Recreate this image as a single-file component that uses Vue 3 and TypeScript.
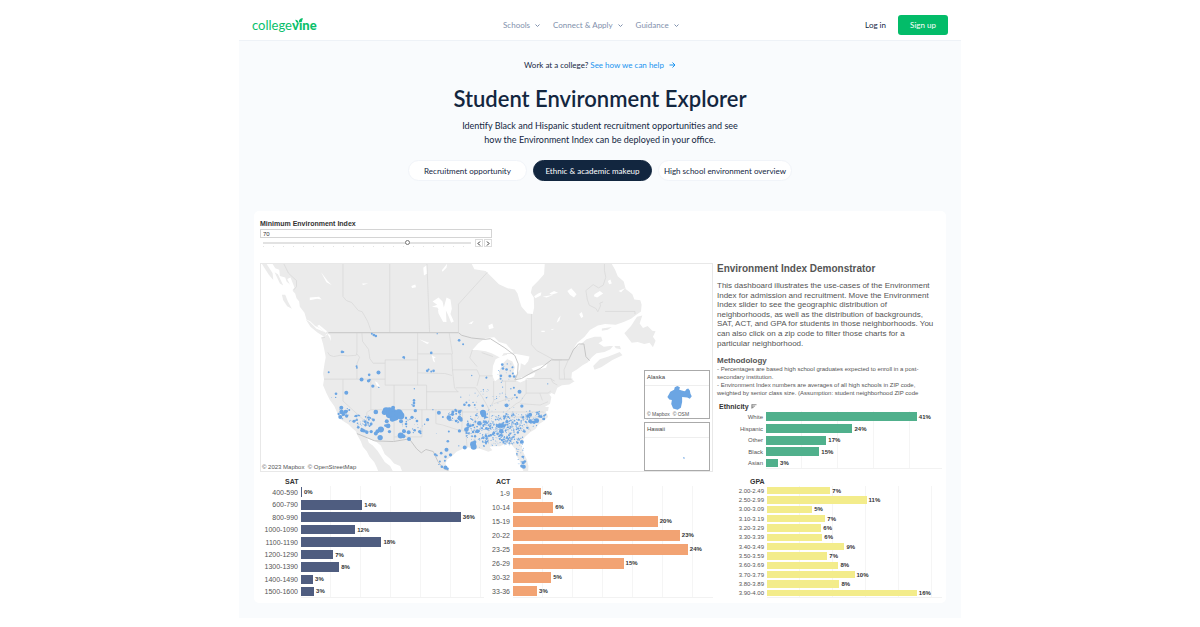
<script setup lang="ts">
import { ref } from 'vue'

interface Row {
  label: string
  share: string
  size: number
}

interface Chart {
  id: string
  title: string
  domain: number
  rows: Row[]
}

type Dot = [number, number, number]

const menus: string[] = ['Schools', 'Connect & Apply', 'Guidance']
const tabs: string[] = ['Recruitment opportunity', 'Ethnic & academic makeup', 'High school environment overview']
const activeTab = ref(1)
const minIndex = ref(70)

function step(delta: number): void {
  minIndex.value = Math.min(100, Math.max(0, Number(minIndex.value) + delta))
}

function rows(data: [string, string, number][]): Row[] {
  return data.map(([label, share, size]) => ({ label, share, size }))
}

const ethnicity: Chart = {
  id: 'ethnicity',
  title: 'Ethnicity',
  domain: 175,
  rows: rows([
    ['White', '41%', 150],
    ['Hispanic', '24%', 86],
    ['Other', '17%', 60],
    ['Black', '15%', 53],
    ['Asian', '3%', 12],
  ]),
}

const scores: Chart[] = [
  {
    id: 'sat',
    title: 'SAT',
    domain: 182,
    rows: rows([
      ['400-590', '0%', 1],
      ['600-790', '14%', 61],
      ['800-990', '36%', 159],
      ['1000-1090', '12%', 54],
      ['1100-1190', '18%', 80],
      ['1200-1290', '7%', 32],
      ['1300-1390', '8%', 38],
      ['1400-1490', '3%', 12],
      ['1500-1600', '3%', 13],
    ]),
  },
  {
    id: 'act',
    title: 'ACT',
    domain: 199,
    rows: rows([
      ['1-9', '4%', 28],
      ['10-14', '6%', 40],
      ['15-19', '20%', 144],
      ['20-22', '23%', 166],
      ['23-25', '24%', 174],
      ['26-29', '15%', 110],
      ['30-32', '5%', 38],
      ['33-36', '3%', 24],
    ]),
  },
  {
    id: 'gpa',
    title: 'GPA',
    domain: 174,
    rows: rows([
      ['2.00-2.49', '7%', 63],
      ['2.50-2.99', '11%', 99],
      ['3.00-3.09', '5%', 45],
      ['3.10-3.19', '7%', 58],
      ['3.20-3.29', '6%', 54],
      ['3.30-3.39', '6%', 55],
      ['3.40-3.49', '9%', 77],
      ['3.50-3.59', '7%', 60],
      ['3.60-3.69', '8%', 71],
      ['3.70-3.79', '10%', 87],
      ['3.80-3.89', '8%', 72],
      ['3.90-4.00', '16%', 149],
    ]),
  },
]

function barWidth(size: number, domain: number): string {
  return `${(size / domain) * 100}%`
}

const placed: Dot[] = [
  [349, 219, 3], [355, 223, 4], [361, 226, 4], [259, 274, 4], [263, 274, 3], [219, 335, 3],
  [303, 317, 3], [304, 322, 3], [445, 290, 4], [447, 294, 2], [528, 277, 4], [546, 219, 2],
  [612, 239, 4], [624, 251, 3], [516, 331, 4], [520, 327, 3], [528, 333, 3], [535, 331, 4],
  [369, 336, 6], [318, 357, 6], [341, 343, 4], [339, 361, 5], [343, 358, 3], [352, 377, 5],
  [370, 381, 2], [272, 397, 6], [241, 400, 4], [240, 411, 2], [228, 411, 1], [257, 442, 6],
  [258, 455, 7], [270, 454, 6], [254, 470, 6], [264, 462, 5], [273, 467, 5], [281, 449, 3],
  [477, 385, 2], [476, 420, 4], [476, 428, 4], [475, 436, 4], [470, 433, 2], [480, 451, 5],
  [361, 455, 7], [413, 442, 6], [392, 451, 10], [387, 456, 8], [402, 450, 9], [403, 462, 12],
  [412, 458, 13], [417, 467, 15], [430, 460, 13], [436, 466, 11], [411, 476, 8], [437, 483, 6],
  [394, 483, 6], [398, 497, 7], [390, 496, 4], [402, 514, 5], [376, 508, 9], [366, 513, 6],
  [361, 520, 6], [374, 532, 8], [380, 507, 5], [320, 510, 6], [326, 512, 5], [333, 514, 4],
  [347, 514, 5], [436, 526, 9], [444, 528, 6], [446, 513, 6], [460, 516, 6], [461, 536, 6],
  [470, 471, 5], [485, 482, 4], [452, 491, 4], [478, 510, 4], [493, 514, 5], [496, 519, 3],
  [517, 478, 5], [508, 492, 2], [551, 457, 6], [563, 470, 3], [581, 472, 7], [592, 462, 5],
  [603, 482, 4], [615, 477, 4], [618, 479, 5], [613, 455, 5], [617, 451, 3], [629, 562, 6],
  [574, 569, 6], [586, 584, 5], [558, 579, 4], [540, 583, 4], [545, 586, 3], [571, 590, 4],
  [569, 602, 3], [554, 604, 3], [551, 613, 2], [560, 620, 4], [571, 622, 6], [577, 626, 4],
  [578, 543, 4], [581, 514, 3], [611, 557, 2], [613, 512, 5], [543, 520, 1], [533, 448, 2],
  [617, 410, 2], [628, 433, 4], [634, 426, 3], [642, 435, 4], [659, 434, 3], [683, 436, 4],
  [650, 345, 2], [695, 350, 2], [685, 388, 2], [694, 412, 2], [684, 457, 9], [686, 463, 8],
  [654, 552, 9], [656, 560, 9], [659, 545, 5], [673, 489, 7], [634, 508, 7], [667, 513, 6],
  [794, 394, 6], [755, 435, 6], [801, 437, 5], [826, 463, 6], [819, 467, 5], [826, 483, 6],
  [838, 486, 5], [846, 481, 7], [854, 468, 4], [859, 469, 4], [868, 466, 3], [872, 463, 3],
  [801, 545, 6], [732, 497, 6], [739, 496, 7], [747, 497, 5], [739, 513, 7], [756, 484, 5],
  [752, 468, 3], [805, 608, 5], [801, 618, 5], [807, 620, 6], [810, 604, 4], [803, 590, 3],
  [742, 312, 4], [757, 310, 2], [744, 324, 4], [755, 327, 4], [773, 320, 3], [738, 346, 4],
  [765, 347, 4], [774, 339, 3], [778, 348, 4], [737, 355, 3], [777, 382, 3], [768, 385, 2],
  [694, 352, 3], [879, 370, 2], [780, 404, 3], [786, 411, 3], [753, 409, 2], [743, 380, 2],
]

/* Each area: centre x, centre y, half width, half height, number of dots, largest radius. */
const areas: number[][] = [
  [675, 508, 45, 54, 115, 4],
  [716, 510, 46, 48, 145, 3],
  [765, 505, 46, 48, 165, 3],
  [802, 490, 45, 30, 60, 3],
  [835, 470, 40, 20, 38, 3],
  [755, 545, 36, 10, 24, 3],
  [796, 575, 13, 42, 26, 3],
  [598, 468, 26, 22, 34, 4],
  [320, 482, 38, 20, 50, 4],
  [265, 458, 18, 20, 14, 3],
  [335, 504, 20, 14, 14, 4],
  [470, 500, 34, 34, 20, 3],
  [755, 435, 60, 40, 28, 1],
  [690, 415, 50, 42, 24, 1],
  [755, 340, 28, 36, 14, 1],
]

function scatter(): Dot[] {
  let seed = 1987
  const next = (): number => {
    seed = (seed * 16807) % 2147483647
    return seed / 2147483647
  }
  const dots: Dot[] = []
  for (const [cx, cy, rx, ry, count, largest] of areas) {
    for (let i = 0; i < count; i++) {
      const angle = next() * Math.PI * 2
      const reach = Math.sqrt(next())
      dots.push([
        Math.round(cx + Math.cos(angle) * rx * reach),
        Math.round(cy + Math.sin(angle) * ry * reach),
        1 + Math.round(next() * next() * largest * 10) / 10,
      ])
    }
  }
  return dots
}

const dots: Dot[] = [...placed, ...scatter()]
</script>

<template>
  <div class="page">
    <header class="top">
      <a class="logo" href="#" aria-label="collegevine">
        <span class="logo-light">college</span><span class="logo-bold">vine</span>
        <svg class="leaf" viewBox="0 0 18 12" aria-hidden="true">
          <path d="M8 12C8 7 5 4 0 4c1 5 3 7 7 8zM9 11C8 5 11 1 18 0c0 6-3 10-9 11z" />
        </svg>
      </a>
      <nav class="menus">
        <button v-for="menu in menus" :key="menu" type="button" class="menu">
          {{ menu }}
          <svg class="chevron" viewBox="0 0 10 6" aria-hidden="true"><path d="M1 1l4 4 4-4" /></svg>
        </button>
      </nav>
      <div class="account">
        <a class="login" href="#">Log in</a>
        <button type="button" class="signup">Sign up</button>
      </div>
    </header>

    <main class="body">
      <p class="promo">
        Work at a college?
        <a href="#">See how we can help
          <svg class="arrow" viewBox="0 0 14 12" aria-hidden="true"><path d="M1 6h11M7 1l5 5-5 5" /></svg>
        </a>
      </p>
      <h1>Student Environment Explorer</h1>
      <p class="intro">Identify Black and Hispanic student recruitment opportunities and see<br>how the Environment Index can be deployed in your office.</p>

      <div class="tabs" role="tablist">
        <button
          v-for="(tab, i) in tabs"
          :key="tab"
          type="button"
          role="tab"
          class="tab"
          :class="{ active: i === activeTab }"
          :aria-selected="i === activeTab"
          @click="activeTab = i"
        >{{ tab }}</button>
      </div>

      <section class="card">
        <div class="parameter">
          <label for="min-index">Minimum Environment Index</label>
          <input id="min-index" v-model="minIndex" class="value" type="text">
          <div class="slider-row">
            <input v-model="minIndex" class="slider" type="range" min="0" max="100" aria-label="Minimum Environment Index slider">
            <button type="button" class="step" aria-label="Decrease" @click="step(-1)">
              <svg viewBox="0 0 8 10" aria-hidden="true"><path d="M6 1L2 5l4 4" /></svg>
            </button>
            <button type="button" class="step" aria-label="Increase" @click="step(1)">
              <svg viewBox="0 0 8 10" aria-hidden="true"><path d="M2 1l4 4-4 4" /></svg>
            </button>
          </div>
        </div>

        <div class="upper">
          <div class="map">
            <svg class="map-art" viewBox="15 9 1359 624" preserveAspectRatio="xMidYMid slice" aria-hidden="true">
              <g class="land">
                <path d="M50 9L58 22 70 26 72 45 88 50 92 62 104 72 112 92 118 98 122 112 130 122 132 138 146 156 152 176 164 182 178 196 192 202 206 214 214 222 202 228 196 230 202 250 206 268 210 290 206 312 202 340 205 356 202 374 212 398 222 418 236 438 244 456 250 474 268 486 278 492 290 504 300 512 306 526 316 544 322 560 334 574 342 590 356 606 364 622 368 633H412L404 618 388 606 378 590 366 572 352 556 340 548 334 530 344 538 360 543 376 556 388 582 404 596 416 610 434 618 440 633H584L575 626 571 610 576 598 590 588 604 575 625 565 640 561 656 567 672 565 688 570 700 575 712 570 704 560 718 558 736 558 752 550 770 554 782 568 784 586 794 600 798 618 806 633H820L821 618 816 598 806 578 801 560 800 545 810 530 826 516 842 506 852 492 864 484 880 470 876 458 864 454 880 452 882 440 870 440 886 430 890 410 884 402 890 398 900 402 908 382 922 374 944 372 960 362 950 356 952 336 968 326 984 314 1000 305 1012 290 1026 278 1050 274 1068 266 1076 256 1066 256 1048 258 1032 248 1044 240 1040 228 1020 228 996 236 976 252 958 262 968 246 990 228 1006 208 1030 194 1052 190 1084 192 1108 184 1130 174 1146 162 1160 152 1162 132 1158 118 1140 116 1134 100 1114 84 1108 62 1090 46 1082 26 1072 9H870L868 40 850 60 832 78 828 96 837 110 838 140 834 160 818 158 800 138 794 120 788 98 780 86 758 82 732 70 704 42 692 30 658 25 650 9z" />
                <path d="M78 102l10 0 8 20 12 22-14-8-12-18zM18 9l14 0 18 28 2 20-14-16zM56 34l10 6 16 34-10-6z" />
                <path d="M150 176l12 8 20 20 30 12-4 14-22-14-22-18zM218 232l8 2 2 10-6-4z" />
                <path d="M1110 218l20-22 18-28 16-4-8 24 10 14 14-6 14 14 10 2-8 16 8 12-8 20-10-14-16 4-20-6-18 2z" />
                <path d="M1016 316l20-20 26-8 34-14 8 10-30 14-34 22-20 8zM1042 203l30-4-12 8-18 3zM1080 256l16 0 4 10-16-3z" />
              </g>
              <g class="water">
                <path d="M652 268l18-20 22-16 26-2 14 14 22 6 22 26-30 2-8 14-28-14-18-6-26-4z" />
                <path d="M714 316l8-20 20-10 18-4 0 10-18 18-10 24 0 20-12 8-8-16z" />
                <path d="M756 280l28 0 40 8-4 14-10 12-12-6-2 18-12 18-10-4 6-20-8-18-14-6zM780 358l28-10 34-12-4 12-42 18zM830 324l20-8 28-6-4 12-38 8z" />
                <path d="M532 122l18-12 12 12 4 18 8-30 12 6 4 28-4 16 10 22-8 4-8-20-8-18 2 36-6 0-12-30-10-14-16-2 16-6zM548 146l10 2 12 34-6 2-14-26z" />
                <path d="M468 75l12-4 2 8-12 2zM504 20l10-8 2 26-10 6zM560 28l16-20-2 12-12 12zM320 68l18 0-16 4zM196 34l20 26 12 12-16-8zM162 110l28-2 8 8-14-2-22 4zM358 362l8 4 8 14-10-4zM528 276l4 10 10 4-6 4 4 12-6-4-4-16zM492 236l16 6 14 4-6 4-14-8z" />
                <path d="M700 194l12-6 4 14-14 4zM640 188l16-8-6 10zM838 106l12-8 10-4-2 10-16 8zM864 108l32-6-20 8zM884 98l14-8 12 6-20 6zM938 90l12-8 16 18-8 10-12-8zM910 174l8-10-4 16-8 6zM974 160l8-6 4 14-6 4zM1020 100l16-10 10 8-18 12-10-4zM1092 90l20-8-12 12zM1060 60l8-4 4 12-8 2zM860 210l10 0 0 4-10 0zM888 206l12-2-8 4z" />
                <path d="M104 50l12 30-6 8-16-34zM190 192l24 20-4 4-26-20zM214 218l10 6 2 18-4-10z" />
              </g>
              <g class="border">
                <path d="M84 9l14 28 24 22 0 18-8 10M262 9v98l10 12 16 6 20 24 12 4 16 28 10 28M403 9v205M515 9l8 205M610 214v-84L697 34M830 160v92l16 18 52 28h24M1050 9v20l4 20-8 24-14 8-16-10-22 18 4 26 6 18 20 10 6 10 8-18-2-8 10-4M1052 152h90v8" />
                <path d="M208 230l-10 2M304 216v58l-2 10-26 2-22-2-20 4-12-4-6-9M304 280l8 10-8 20v46M205 356h184M319 216l2 26 18 24 4 28 10 14 36 0M389 298v76h125M389 298h98M487 216v158M487 280h103l2 48 6 54 10 12M487 337l82 2 22 6M582 216l10 64M346 356v92M262 356v66l66 60 12 12M346 448l-12 8-2 36M416 374v168M346 448h200M514 374v74M514 394h96M546 448h76l-2 64M542 448v42l20 4 56 18M416 530h84v-82M592 328h74M602 382h60l20 28 22 40M620 455h160M666 328l8 18-8 30M672 346h42M652 268l-8 24 22 26M680 276l34 12M716 362v60l-10 18M752 362v60M716 430l40-14 30-6M740 362h44M814 354v44h66l8-6M814 398l-18 26-12 6M622 512h10l4 50M660 470v80M704 454l-4 98M756 470l10 82M726 470h130M784 430l-30 24M780 455h94M796 430l60 4 24-10M855 398l8 22M816 354h70l14 8M888 352l6 14 14 8M914 356v-56M930 356l-2-28 12-28M914 356h40M796 470l16 16 16 26" />
              </g>
              <g class="border strong">
                <path d="M218 216H610L620 224 650 232 690 236 706 234 750 262 780 285 790 310 788 340 780 358 800 354 835 334 856 324 890 298 942 298 956 268 972 250 988 250 994 288 1005 300" />
                <path d="M304 520l54 22 56 2 48-8 22 30 14 12 14-10 22 6 14 30 16 20 16 8" />
              </g>
              <g class="dots">
                <circle v-for="(dot, i) in dots" :key="i" :cx="dot[0]" :cy="dot[1]" :r="dot[2]" />
              </g>
            </svg>
            <span class="credit">© 2023 Mapbox &nbsp;© OpenStreetMap</span>
            <div class="insets">
              <div class="inset">
                <b>Alaska</b>
                <svg class="inset-art" viewBox="0 0 190 78" aria-hidden="true">
                  <path class="alaska" d="M74 18l12-6 2-8 8-4 8 4-2 8 16 4 4-2 2-4 6-2 5 6 2 10 4 8-6 8-8-4-16-2 0 16-4 18-10 6-14-4-6-14 2-12-8-2-6-8 5-8z" />
                </svg>
                <span class="inset-credit">© Mapbox &nbsp;© OSM</span>
              </div>
              <div class="inset">
                <b>Hawaii</b>
                <svg class="inset-art" viewBox="0 0 190 78" aria-hidden="true">
                  <path class="alaska" d="M114 60l6 2-2 3-4-2z" />
                </svg>
              </div>
            </div>
          </div>

          <div class="notes">
            <h2>Environment Index Demonstrator</h2>
            <p class="about">This dashboard illustrates the use-cases of the Environment<br>Index for admission and recruitment. Move the Environment<br>Index slider to see the geographic distribution of<br>neighborhoods, as well as the distribution of backgrounds,<br>SAT, ACT, and GPA for students in those neighborhoods. You<br>can also click on a zip code to filter those charts for a<br>particular neighborhood.</p>
            <h3>Methodology</h3>
            <p class="method">- Percentages are based high school graduates expected to enroll in a post-<br>secondary institution.<br>- Environment Index numbers are averages of all high schools in ZIP code,<br>weighted by senior class size. (Assumption: student neighborhood ZIP code</p>
            <div class="chart ethnicity">
              <h4>
                {{ ethnicity.title }}
                <svg class="sort" viewBox="0 0 16 14" aria-hidden="true"><path d="M2 2h13M2 6h9M2 10h5M2 1v12" /></svg>
              </h4>
              <div class="plot">
                <div v-for="row in ethnicity.rows" :key="row.label" class="row">
                  <span class="name">{{ row.label }}</span>
                  <div class="track">
                    <div class="bar" :style="{ width: barWidth(row.size, ethnicity.domain) }"></div>
                    <b>{{ row.share }}</b>
                  </div>
                </div>
              </div>
            </div>
          </div>
        </div>

        <div class="lower">
          <div v-for="chart in scores" :key="chart.id" class="chart" :class="chart.id">
            <h4>{{ chart.title }}</h4>
            <div class="plot">
              <div v-for="row in chart.rows" :key="row.label" class="row">
                <span class="name">{{ row.label }}</span>
                <div class="track">
                  <div class="bar" :style="{ width: barWidth(row.size, chart.domain) }"></div>
                  <b>{{ row.share }}</b>
                </div>
              </div>
            </div>
          </div>
        </div>
      </section>
    </main>
  </div>
</template>

<style>
body {
  margin: 0;
  background: #fff;
}
</style>

<style scoped>
.page {
  max-width: 722px;
  margin: 0 auto;
  padding-bottom: 10px;
  font-family: Lato, "Open Sans", sans-serif;
  color: #13263f;
}

.page *,
.page *::before {
  box-sizing: border-box;
}

h1, h2, h3, h4, p {
  margin: 0;
}

button {
  margin: 0;
  padding: 0;
  border: 0;
  background: none;
  color: inherit;
  font: inherit;
  cursor: pointer;
}

a {
  color: inherit;
  text-decoration: none;
}

.top {
  display: flex;
  align-items: center;
  justify-content: space-between;
  padding: 15px 13px 5px;
  border-bottom: 1px solid #eef2f7;
  font-size: 8px;
}

.logo {
  position: relative;
  display: flex;
  align-items: baseline;
  color: #0abf6b;
  font-size: 13px;
  line-height: 20px;
}

.logo-light {
  font-weight: 400;
}

.logo-bold {
  font-weight: 900;
}

.leaf {
  position: absolute;
  top: 3px;
  right: 14px;
  width: 8px;
  height: 5px;
  fill: #0abf6b;
}

.menus {
  display: flex;
  gap: 13px;
  color: #7f90ac;
}

.menu {
  display: flex;
  align-items: center;
  gap: 5px;
}

.chevron {
  width: 5px;
  height: 3px;
  fill: none;
  stroke: currentColor;
  stroke-width: 2;
}

.account {
  display: flex;
  align-items: center;
  gap: 12px;
}

.signup {
  width: 50px;
  height: 20px;
  border-radius: 3px;
  background: #03bc69;
  color: #fff;
}

.body {
  padding: 17px 15px 15px;
  background: #f9fbfd;
  text-align: center;
}

.promo {
  font-size: 8px;
  line-height: 14px;
}

.promo a {
  color: #1b94f0;
}

.arrow {
  width: 7px;
  height: 6px;
  margin-left: 3px;
  fill: none;
  stroke: currentColor;
  stroke-width: 2;
}

h1 {
  margin-top: 13px;
  font-size: 22px;
  line-height: 28px;
  font-weight: 600;
}

.intro {
  margin-top: 6px;
  font-size: 9px;
  line-height: 14px;
}

.tabs {
  display: flex;
  justify-content: center;
  gap: 6px;
  margin-top: 13px;
}

.tab {
  min-width: 119px;
  height: 21px;
  padding: 0 5px;
  border: 1px solid #f1f4f9;
  border-radius: 11px;
  background: #fff;
  font-size: 8px;
}

.tab.active {
  border-color: #12263f;
  background: #12263f;
  color: #fff;
}

.card {
  margin-top: 30px;
  padding: 8px 4px 5px 6px;
  border-radius: 5px;
  background: #fff;
  color: #555;
  font-family: "Liberation Sans", Arial, sans-serif;
  text-align: left;
}

.parameter {
  display: flex;
  flex-direction: column;
  width: 34%;
  color: #333;
  font-size: 7px;
}

.parameter label {
  font-weight: 700;
  line-height: 10px;
}

.value {
  width: 100%;
  height: 9px;
  padding: 0 2px;
  border: 1px solid #d4d4d4;
  color: #333;
  font: 6px "Liberation Sans", Arial, sans-serif;
}

.slider-row {
  display: flex;
  align-items: center;
  gap: 1px;
  height: 10px;
}

.slider {
  flex: 1;
  min-width: 0;
  height: 8px;
  margin: 0 3px;
  appearance: none;
  background: repeating-linear-gradient(to right, #e4e4e4 0 1px, transparent 1px 10px) 0 100% / 100% 1px no-repeat;
}

.slider::-webkit-slider-runnable-track {
  height: 2px;
  background: #e2e2e2;
}

.slider::-webkit-slider-thumb {
  width: 5px;
  height: 5px;
  margin-top: -2px;
  appearance: none;
  border: 1px solid #777;
  border-radius: 50%;
  background: #fff;
}

.step {
  display: flex;
  align-items: center;
  justify-content: center;
  width: 8px;
  height: 8px;
  border: 1px solid #ddd;
}

.step svg {
  width: 4px;
  height: 5px;
  fill: none;
  stroke: #333;
  stroke-width: 2;
}

.upper {
  display: grid;
  grid-template-columns: minmax(0, 453fr) minmax(0, 225fr);
  gap: 4px;
  margin-top: 15px;
}

.map {
  position: relative;
  overflow: hidden;
  border: 1px solid #e8e8e8;
}

.map-art {
  display: block;
  width: 100%;
  height: 100%;
}

.land {
  fill: #ebebeb;
}

.water {
  fill: #fff;
}

.border {
  fill: none;
  stroke: #d6d6d6;
  stroke-width: 2;
}

.strong {
  stroke: #c6c6c6;
  stroke-width: 3;
}

.dots {
  fill: #6ba5e3;
}

.credit {
  position: absolute;
  left: 1px;
  bottom: 0;
  font-size: 6px;
  line-height: 8px;
}

.insets {
  position: absolute;
  right: 2px;
  bottom: 0;
  display: flex;
  flex-direction: column;
  gap: 3px;
  width: 66px;
}

.inset {
  height: 49px;
  border: 1px solid #aaa;
  background: #fff;
  font-size: 6px;
}

.inset b {
  display: block;
  height: 15px;
  padding-left: 2px;
  border-bottom: 1px solid #eee;
  color: #444;
  font-weight: 400;
  line-height: 13px;
}

.inset-art {
  display: block;
  width: 100%;
  height: 25px;
}

.alaska {
  fill: #6ba5e3;
}

.inset-credit {
  display: block;
  padding-left: 2px;
  font-size: 5px;
  line-height: 6px;
}

.notes {
  white-space: nowrap;
}

h2 {
  font-size: 10px;
  line-height: 12px;
  font-weight: 700;
}

.about {
  margin-top: 6px;
  font-size: 8px;
  line-height: 1.2;
}

h3 {
  margin-top: 8px;
  font-size: 8px;
  line-height: 9px;
}

.method {
  font-size: 6px;
  line-height: 8px;
}

.chart h4 {
  color: #333;
  font-size: 7px;
  line-height: 8px;
  font-weight: 700;
}

.plot {
  display: grid;
  grid-auto-rows: 1fr;
}

.row {
  display: flex;
  min-height: 0;
}

.name {
  flex: none;
  display: flex;
  align-items: center;
  justify-content: flex-end;
  padding-right: 3px;
  white-space: nowrap;
}

.track {
  flex: 1;
  display: flex;
  align-items: center;
  min-width: 0;
}

.bar {
  flex: none;
  height: 78%;
}

.track b {
  padding-left: 2px;
  color: #333;
  font-size: 6px;
  line-height: 8px;
}

.lower {
  display: grid;
  grid-template-columns: repeat(3, minmax(0, 1fr));
  gap: 5px;
  margin-top: 6px;
}

.lower .plot {
  height: 112px;
}

.lower .row:last-child .track,
.ethnicity .row:last-child .track {
  border-bottom: 1px solid #f2f2f2;
}

.sat .name {
  width: 41px;
  font-size: 7px;
}

.sat h4 {
  padding-left: 25px;
}

.sat .track {
  background: repeating-linear-gradient(to right, transparent 0 29px, #f5f5f5 29px 30px);
}

.sat .bar {
  background: #4f5d80;
}

.act .name {
  width: 24px;
  font-size: 7px;
}

.act h4 {
  padding-left: 7px;
}

.act .track {
  background: repeating-linear-gradient(to right, transparent 0 29px, #f5f5f5 29px 30px);
}

.act .bar {
  background: #f2a373;
}

.gpa .name {
  width: 49px;
  font-size: 6px;
}

.gpa h4 {
  padding-left: 32px;
}

.gpa .track {
  background: repeating-linear-gradient(to right, transparent 0 32px, #f5f5f5 32px 33px);
}

.gpa .bar {
  background: #f3ec8b;
}

.ethnicity {
  margin-top: 6px;
}

.ethnicity h4 {
  padding-left: 2px;
}

.ethnicity .plot {
  height: 58px;
}

.ethnicity .name {
  width: 49px;
  font-size: 6px;
}

.ethnicity .track {
  background: repeating-linear-gradient(to right, transparent 0 35px, #f5f5f5 35px 36px);
}

.ethnicity .bar {
  background: #50b08c;
}

.sort {
  width: 6px;
  height: 5px;
  fill: none;
  stroke: #666;
  stroke-width: 2;
}
</style>
